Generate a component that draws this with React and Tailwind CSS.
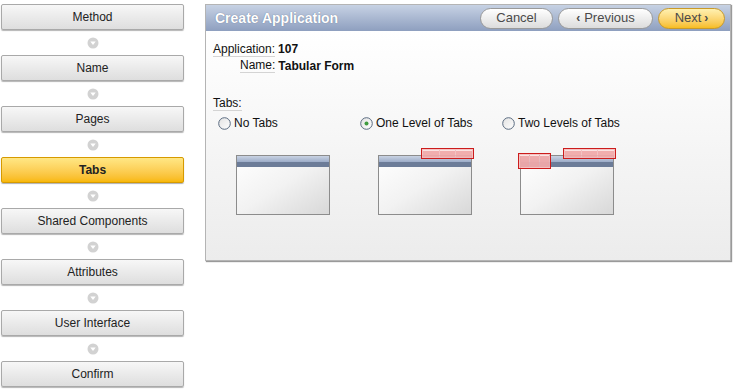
import React from 'react';

const steps = ['Method', 'Name', 'Pages', 'Tabs', 'Shared Components', 'Attributes', 'User Interface', 'Confirm'];

const StepArrow = () => (
  <div className="h-[25px] flex items-center justify-center">
    <svg width="12" height="12" viewBox="0 0 12 12">
      <circle cx="6" cy="6" r="5.5" fill="#d2d2d2" />
      <path d="M3.3 4.6 L8.7 4.6 L6 8 Z" fill="#ffffff" />
    </svg>
  </div>
);

const StepButton = ({ label, active }) => (
  <div
    className={
      active
        ? 'h-[26px] flex items-center justify-center rounded-[2px] border border-[#d69a00] bg-gradient-to-b from-[#ffe784] to-[#f8b800] text-[12px] font-bold text-[#222] shadow-[0_1px_1px_#b0b0b0]'
        : 'h-[26px] flex items-center justify-center rounded-[2px] border border-[#a9a9a9] bg-gradient-to-b from-[#f7f7f7] to-[#dedede] text-[12px] text-[#222] shadow-[0_1px_1px_#b5b5b5]'
    }
  >
    {label}
  </div>
);

const Radio = ({ checked }) => (
  <svg width="13" height="13" viewBox="0 0 13 13">
    <defs>
      <linearGradient id="rg" x1="0" y1="0" x2="1" y2="1">
        <stop offset="0" stopColor="#e2e2e2" />
        <stop offset="1" stopColor="#ffffff" />
      </linearGradient>
    </defs>
    <circle cx="6.5" cy="6.5" r="5.8" fill="url(#rg)" stroke="#5a6b80" strokeWidth="1" />
    {checked && <circle cx="6.5" cy="6.5" r="2" fill="#3f9b3f" />}
  </svg>
);

const TabStrip = ({ className }) => (
  <div className={'absolute flex gap-[1px] border border-[#cc1c1c] bg-[#f3b8b8]/85 p-[1px] ' + className}>
    <div className="flex-1 border-t border-[#fbe3e3] bg-[#eea0a0]/60" />
    <div className="flex-1 border-t border-[#fbe3e3] bg-[#eea0a0]/60" />
    <div className="flex-1 border-t border-[#fbe3e3] bg-[#eea0a0]/60" />
  </div>
);

const Preview = ({ kind }) => (
  <div className="relative ml-[18px] mt-[24px] w-[94px] h-[60px]">
    <div className="w-full h-full border border-[#8c8c8c] bg-gradient-to-br from-[#ffffff] via-[#f2f2f2] to-[#d8d8d8] flex flex-col">
      <div className="h-[6px] bg-gradient-to-b from-[#c9d3e3] to-[#9cacc8]" />
      <div className="h-[5px] bg-[#6c7c98]" />
    </div>
    {kind >= 1 && <TabStrip className="left-[43px] top-[-7px] w-[53px] h-[11px]" />}
    {kind === 2 && <TabStrip className="left-[-2px] top-[-2px] w-[33px] h-[16px]" />}
  </div>
);

const PillButton = ({ children, primary, w }) => (
  <div
    className={
      (primary
        ? 'border-[#c99a2a] bg-gradient-to-b from-[#fff1b0] to-[#f7bd1d] '
        : 'border-[#9a9a9a] bg-gradient-to-b from-[#ffffff] to-[#dcdcdc] ') +
      'h-[21px] rounded-full border flex items-center justify-center text-[13px] text-[#4a4a4a] ' +
      w
    }
  >
    {children}
  </div>
);

const App = () => {
  return (
    <div
      className="w-[733px] h-[389px] bg-white flex overflow-hidden"
      style={{ fontFamily: '"Liberation Sans", Arial, sans-serif' }}
    >
      <div className="w-[184px] pl-[1px] pt-[4px] flex flex-col">
        {steps.map((s, i) => (
          <React.Fragment key={s}>
            {i > 0 && <StepArrow />}
            <StepButton label={s} active={s === 'Tabs'} />
          </React.Fragment>
        ))}
      </div>

      <div className="ml-[21px] mt-[4px] w-[526px] h-[257px] border border-[#b4b4b4] shadow-[1px_1px_1px_#9a9a9a] flex flex-col">
        <div className="h-[26px] shrink-0 bg-gradient-to-b from-[#c7d2e4] to-[#8e9fbf] flex items-center pl-[9px] pr-[5px]">
          <div className="text-[14px] font-bold text-white [text-shadow:0_0_1px_#5a6a88]">Create Application</div>
          <div className="ml-auto flex gap-[5px]">
            <PillButton w="w-[73px]">Cancel</PillButton>
            <PillButton w="w-[95px]">
              <span className="text-[12px] font-bold mr-[4px]">&#8249;</span>Previous
            </PillButton>
            <PillButton primary w="w-[67px]">
              Next<span className="text-[12px] font-bold ml-[3px]">&#8250;</span>
            </PillButton>
          </div>
        </div>

        <div className="flex-1 bg-gradient-to-b from-[#ffffff] to-[#ececec] pl-[7px] pt-[10px] text-[12px] text-[#111]">
          <div className="flex h-[16px] items-center">
            <span className="border-b border-[#d4d4d4] leading-[14px]">Application:</span>
            <span className="ml-[3px] font-bold">107</span>
          </div>
          <div className="flex h-[17px] items-center pl-[27px]">
            <span className="border-b border-[#d4d4d4] leading-[14px]">Name:</span>
            <span className="ml-[3px] font-bold">Tabular Form</span>
          </div>
          <div className="mt-[21px] h-[16px] flex items-center">
            <span className="border-b border-[#d4d4d4] leading-[14px]">Tabs:</span>
          </div>
          <div className="flex pl-[5px] mt-[4px]">
            {['No Tabs', 'One Level of Tabs', 'Two Levels of Tabs'].map((t, i) => (
              <div key={t} className="w-[142px] flex flex-col">
                <div className="flex items-center h-[16px] gap-[3px]">
                  <Radio checked={i === 1} />
                  <span>{t}</span>
                </div>
                <Preview kind={i} />
              </div>
            ))}
          </div>
        </div>
      </div>
    </div>
  );
};

export default App;
